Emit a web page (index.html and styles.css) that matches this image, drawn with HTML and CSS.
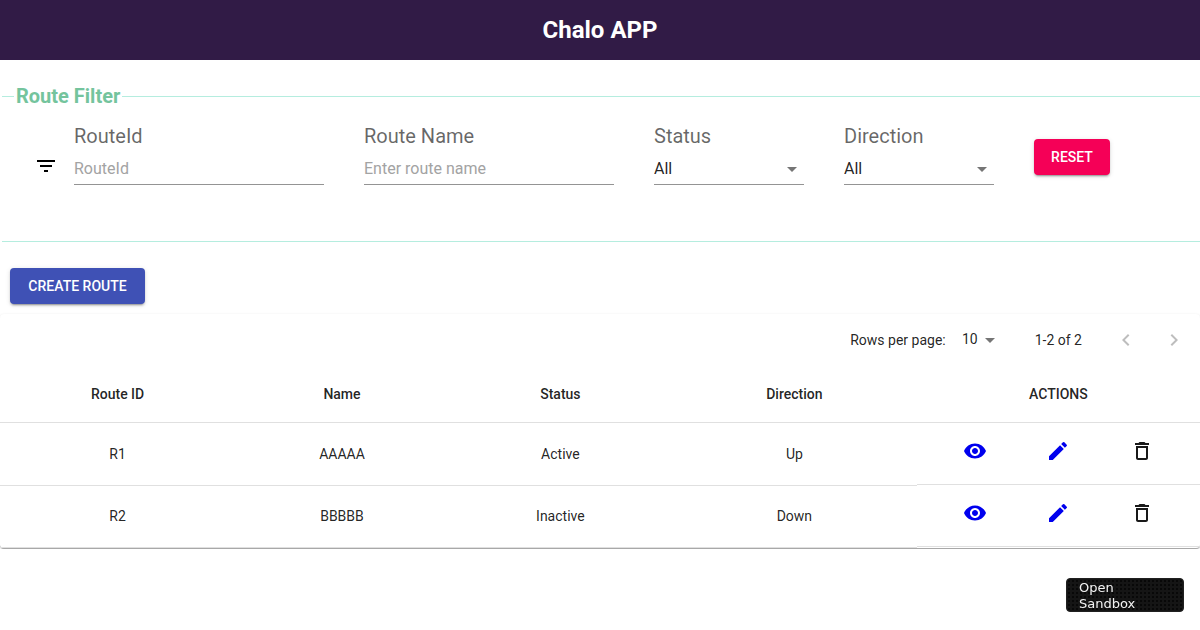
FILE: index.html
```
<!DOCTYPE html>
<html lang="en">
<head>
<meta charset="utf-8">
<meta name="viewport" content="width=device-width, initial-scale=1">
<title>Chalo APP</title>
<link rel="stylesheet" href="styles.css">
</head>
<body>
<svg class="sprite" aria-hidden="true">
  <symbol id="filter" viewBox="0 0 24 24"><path d="M10 18h4v-2h-4v2zM3 6v2h18V6H3zm3 7h12v-2H6v2z"/></symbol>
  <symbol id="caret" viewBox="0 0 24 24"><path d="M7 10l5 5 5-5z"/></symbol>
  <symbol id="left" viewBox="0 0 24 24"><path d="M15.41 7.41L14 6l-6 6 6 6 1.41-1.41L10.83 12z"/></symbol>
  <symbol id="right" viewBox="0 0 24 24"><path d="M10 6L8.59 7.41 13.17 12l-4.58 4.59L10 18l6-6z"/></symbol>
  <symbol id="eye" viewBox="0 0 24 24"><path d="M12 4.5C7 4.5 2.73 7.61 1 12c1.73 4.39 6 7.5 11 7.5s9.27-3.11 11-7.5c-1.73-4.39-6-7.5-11-7.5zM12 17c-2.76 0-5-2.24-5-5s2.24-5 5-5 5 2.24 5 5-2.24 5-5 5zm0-8c-1.66 0-3 1.34-3 3s1.34 3 3 3 3-1.34 3-3-1.34-3-3-3z"/></symbol>
  <symbol id="pencil" viewBox="0 0 24 24"><path d="M3 17.25V21h3.75L17.81 9.94l-3.75-3.75L3 17.25zM20.71 7.04c.39-.39.39-1.02 0-1.41l-2.34-2.34a.9959.9959 0 00-1.41 0l-1.83 1.83 3.75 3.75 1.83-1.83z"/></symbol>
  <symbol id="trash" viewBox="0 0 24 24"><path d="M6 19c0 1.1.9 2 2 2h8c1.1 0 2-.9 2-2V7H6v12zM8 9h8v10H8V9zm7.500-5l-1-1h-5l-1 1H5v2h14V4z"/></symbol>
</svg>
<header class="app-bar"><h1 class="app-title">Chalo APP</h1></header>
<main>
  <fieldset class="filter">
    <legend class="filter-legend">Route Filter</legend>
    <div class="filter-row">
      <svg class="icon filter-icon"><use href="#filter"/></svg>
      <div class="fields">
        <div class="field">
          <label class="field-label" for="route-id">RouteId</label>
          <input class="field-input" id="route-id" type="text" placeholder="RouteId">
        </div>
        <div class="field">
          <label class="field-label" for="route-name">Route Name</label>
          <input class="field-input" id="route-name" type="text" placeholder="Enter route name">
        </div>
        <div class="field field-short">
          <label class="field-label" for="status">Status</label>
          <div class="select-box">
            <select class="field-input" id="status"><option>All</option><option>Active</option><option>Inactive</option></select>
            <svg class="icon caret"><use href="#caret"/></svg>
          </div>
        </div>
        <div class="field field-short">
          <label class="field-label" for="direction">Direction</label>
          <div class="select-box">
            <select class="field-input" id="direction"><option>All</option><option>Up</option><option>Down</option></select>
            <svg class="icon caret"><use href="#caret"/></svg>
          </div>
        </div>
        <button class="button button-reset" type="button">RESET</button>
      </div>
    </div>
  </fieldset>
  <div class="toolbar"><button class="button button-create" type="button">CREATE ROUTE</button></div>
  <section class="paper">
    <div class="pagination">
      <label for="rows">Rows per page:</label>
      <div class="select-box rows-box">
        <select class="rows-select" id="rows"><option>10</option><option>25</option></select>
        <svg class="icon caret"><use href="#caret"/></svg>
      </div>
      <span class="range">1-2 of 2</span>
      <div class="pager">
        <button class="icon-button" type="button" disabled aria-label="Previous page"><svg class="icon"><use href="#left"/></svg></button>
        <button class="icon-button" type="button" disabled aria-label="Next page"><svg class="icon"><use href="#right"/></svg></button>
      </div>
    </div>
    <table class="routes">
      <colgroup><col class="col-id"><col class="col-name"><col class="col-status"><col class="col-direction"><col class="col-actions"></colgroup>
      <thead>
        <tr><th>Route ID</th><th>Name</th><th>Status</th><th>Direction</th><th>ACTIONS</th></tr>
      </thead>
      <tbody>
        <tr>
          <td>R1</td><td>AAAAA</td><td>Active</td><td>Up</td>
          <td class="actions-cell"><div class="actions">
            <a class="action" href="#view-r1" aria-label="View R1"><svg class="icon"><use href="#eye"/></svg></a>
            <a class="action" href="#edit-r1" aria-label="Edit R1"><svg class="icon"><use href="#pencil"/></svg></a>
            <button class="action action-delete" type="button" aria-label="Delete R1"><svg class="icon"><use href="#trash"/></svg></button>
          </div></td>
        </tr>
        <tr>
          <td>R2</td><td>BBBBB</td><td>Inactive</td><td>Down</td>
          <td class="actions-cell"><div class="actions">
            <a class="action" href="#view-r2" aria-label="View R2"><svg class="icon"><use href="#eye"/></svg></a>
            <a class="action" href="#edit-r2" aria-label="Edit R2"><svg class="icon"><use href="#pencil"/></svg></a>
            <button class="action action-delete" type="button" aria-label="Delete R2"><svg class="icon"><use href="#trash"/></svg></button>
          </div></td>
        </tr>
      </tbody>
    </table>
  </section>
</main>
<button class="sandbox" type="button">Open<br>Sandbox</button>
</body>
</html>
```
FILE: styles.css
```
*, *::before, *::after { box-sizing: border-box; }
body {
  margin: 0;
  background: #fff;
  color: rgba(0, 0, 0, 0.87);
  font-family: Roboto, "Liberation Sans", sans-serif;
  font-size: 14px;
  line-height: 20px;
}
button, input, select { font: inherit; color: inherit; }
button { border: 0; cursor: pointer; }
.sprite { display: none; }
.icon { display: block; width: 24px; height: 24px; fill: currentColor; flex: none; }

.app-bar {
  display: flex;
  align-items: center;
  justify-content: center;
  height: 60px;
  background: #311b46;
}
.app-title { margin: 0; color: #fff; font-size: 24px; line-height: 28px; font-weight: 700; }

.filter {
  margin: 24px 0 0 2px;
  padding: 16px 12px 56px;
  border: solid #b5eddf;
  border-width: 1px 0;
}
.filter-legend { padding: 0 2px; color: #74c49d; font-size: 20px; line-height: 24px; font-weight: 700; }
.filter-row { display: flex; align-items: flex-end; gap: 16px; padding-left: 20px; }
.filter-icon { margin-bottom: 7px; color: #000; }
.fields { display: flex; flex-wrap: wrap; flex: 1; gap: 16px 40px; }
.field { width: 250px; }
.field-short { width: 150px; }
.field-label { display: block; color: rgba(0, 0, 0, 0.6); font-size: 20px; line-height: 24px; }
.field-input {
  display: block;
  width: 100%;
  height: 32px;
  margin-top: 5px;
  padding: 0;
  border: 0;
  border-bottom: 1px solid #949494;
  border-radius: 0;
  background: transparent;
  font-size: 16px;
  appearance: none;
}
.field-input::placeholder { color: #a3a3a3; opacity: 1; }
.select-box { position: relative; }
.caret { position: absolute; top: 4px; right: 0; color: #757575; pointer-events: none; }

.button {
  height: 36px;
  padding: 0 16px;
  border-radius: 4px;
  color: #fff;
  font-weight: 500;
  box-shadow: 0 3px 1px -2px rgba(0, 0, 0, 0.2), 0 2px 2px 0 rgba(0, 0, 0, 0.14), 0 1px 5px 0 rgba(0, 0, 0, 0.12);
}
.button-reset { margin-top: 15px; min-width: 76px; background: #f50057; }
.button-create { min-width: 135px; background: #3f51b5; }
.toolbar { padding: 26px 10px 10px; }

.paper {
  border-bottom: 1px solid #a8a8a8;
  border-radius: 4px;
  background: #fff;
  box-shadow: 0 1px 3px 0 rgba(0, 0, 0, 0.14);
}
.pagination { display: flex; align-items: center; justify-content: flex-end; height: 52px; padding-right: 2px; }
.rows-box { width: 56px; margin-right: 33px; }
.rows-select {
  display: block;
  width: 100%;
  height: 24px;
  padding: 0 24px 2px 8px;
  border: 0;
  background: transparent;
  text-align: right;
  appearance: none;
}
.rows-box .caret { top: 0; }
.pager { display: flex; margin-left: 20px; }
.icon-button { padding: 12px; background: transparent; color: rgba(0, 0, 0, 0.26); }

.routes { width: 100%; table-layout: fixed; border-spacing: 0; }
.col-id { width: 19.6%; }
.col-name { width: 17.8%; }
.col-status { width: 18.6%; }
.col-direction { width: 20.4%; }
.col-actions { width: 23.6%; }
.routes th, .routes td { padding: 16px; border-bottom: 1px solid #e0e0e0; text-align: center; }
.routes th { font-weight: 500; line-height: 24px; }
.routes td { padding: 21px 16px; }
.routes tr:last-child td { padding-top: 20px; }
.routes tr .actions-cell, .routes tr:last-child .actions-cell { padding: 0; border: 0; vertical-align: top; }
.actions {
  display: grid;
  grid-template-columns: repeat(3, 1fr);
  padding: 16px 16px 21px;
  border-bottom: 1px solid #e0e0e0;
}
.routes tr:last-child .actions { padding-top: 15px; }
.action { display: flex; justify-content: center; padding: 0; background: transparent; color: #00e; }
.action-delete { color: rgba(0, 0, 0, 0.9); }

.sandbox {
  position: fixed;
  right: 16px;
  bottom: 18px;
  width: 118px;
  height: 34px;
  padding: 1px 12px 0;
  border: 1px solid #202020;
  border-radius: 4px;
  background: #151515 radial-gradient(#080808 1px, transparent 1px) 0 0 / 4px 4px;
  color: #f2f2f2;
  font-family: "DejaVu Sans", sans-serif;
  font-size: 13px;
  line-height: 16px;
  text-align: left;
}
```
